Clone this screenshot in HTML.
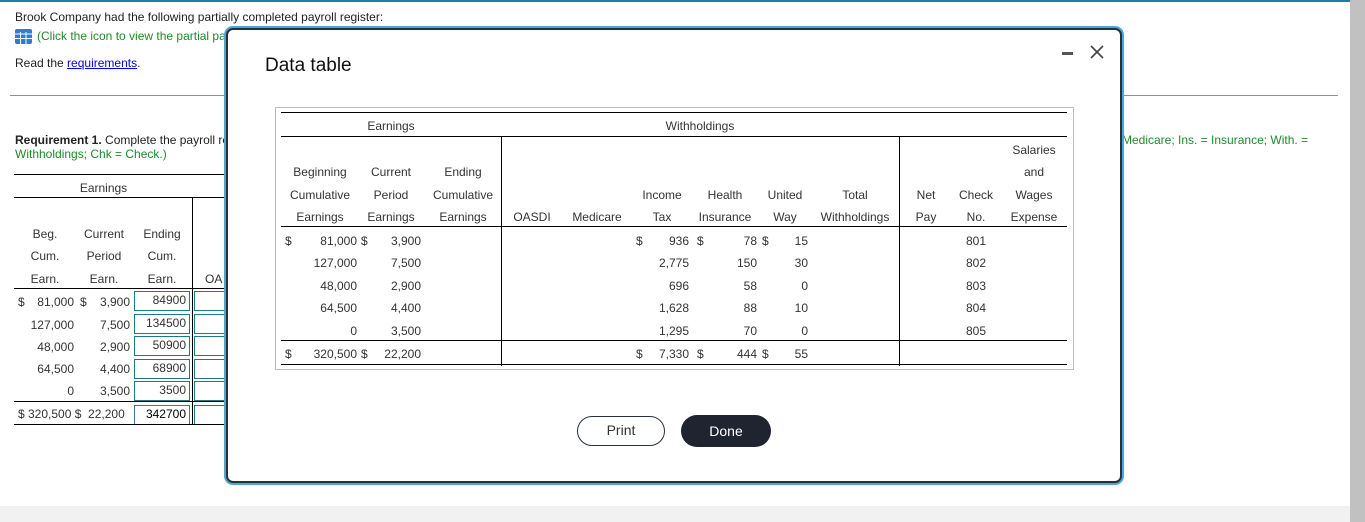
<!DOCTYPE html>
<html><head><meta charset="utf-8"><style>
*{margin:0;padding:0;box-sizing:border-box}
body{width:1365px;height:522px;position:relative;overflow:hidden;background:#fff;font-family:"Liberation Sans",sans-serif;font-size:12px;color:#222}
div{position:absolute;white-space:nowrap}
.c{text-align:center}
.r{text-align:right}
.h{color:#333}
.v{color:#333}
.ln{height:1px;background:#000}
.vl{width:1px;background:#000}
.in{border:1px solid #1a7a8a;height:20px;width:58px;text-align:right;padding-right:3px;line-height:16px;font-size:12px;color:#333}
</style></head><body>
<div style="left:0;top:0;width:1350px;height:2px;background:#1a7fa0"></div>
<div style="left:1350px;top:0;width:15px;height:522px;background:#c1c1c1"></div>
<div style="left:0;top:506px;width:1350px;height:16px;background:#f1f1f1"></div>

<div style="left:15px;top:10px">Brook Company had the following partially completed payroll register:</div>
<div style="left:15px;top:29px;width:17px;height:15px;background:#2a7fd0;border-radius:2px"></div>
<svg style="position:absolute;left:15px;top:29px" width="17" height="15"><g stroke="#fff" stroke-width="1"><line x1="0" y1="5" x2="17" y2="5"/><line x1="0" y1="9.5" x2="17" y2="9.5"/><line x1="5.5" y1="3" x2="5.5" y2="15"/><line x1="11" y1="3" x2="11" y2="15"/></g></svg>
<div style="left:37px;top:29px;color:#1d8a2a">(Click the icon to view the partial pay</div>
<div style="left:15px;top:56px">Read the <span style="color:#00e;text-decoration:underline">requirements</span>.</div>
<div style="left:10px;top:95px;width:1328px;height:1px;background:#8a93a0"></div>
<div style="left:15px;top:133px"><b>Requirement 1.</b> Complete the payroll re</div>
<div style="left:15px;top:147px;color:#1d8a2a">Withholdings; Chk = Check.)</div>
<div style="left:1122px;top:133px;color:#1d8a2a">Medicare; Ins. = Insurance; With. =</div>

<!-- left table -->
<div class="ln" style="left:14px;top:174px;width:214px"></div>
<div class="c h" style="left:14px;top:181px;width:179px">Earnings</div>
<div class="ln" style="left:14px;top:197px;width:214px"></div>
<div class="vl" style="left:192px;top:197px;height:228px"></div>
<div class="c h" style="left:30px;top:227px;width:30px">Beg.</div>
<div class="c h" style="left:80px;top:227px;width:48px">Current</div>
<div class="c h" style="left:140px;top:227px;width:44px">Ending</div>
<div class="c h" style="left:30px;top:249px;width:30px">Cum.</div>
<div class="c h" style="left:80px;top:249px;width:48px">Period</div>
<div class="c h" style="left:140px;top:249px;width:44px">Cum.</div>
<div class="c h" style="left:28px;top:272px;width:34px">Earn.</div>
<div class="c h" style="left:80px;top:272px;width:48px">Earn.</div>
<div class="c h" style="left:140px;top:272px;width:44px">Earn.</div>
<div class="h" style="left:205px;top:272px">OA</div>
<div class="ln" style="left:14px;top:288px;width:214px"></div>
<div class="v" style="left:18px;top:295px">$</div>
<div class="r v" style="left:30px;top:295px;width:44px">81,000</div>
<div class="v" style="left:80px;top:295px">$</div>
<div class="r v" style="left:80px;top:295px;width:50px">3,900</div>
<div class="r v" style="left:30px;top:318px;width:44px">127,000</div>
<div class="r v" style="left:80px;top:318px;width:50px">7,500</div>
<div class="r v" style="left:30px;top:340px;width:44px">48,000</div>
<div class="r v" style="left:80px;top:340px;width:50px">2,900</div>
<div class="r v" style="left:30px;top:362px;width:44px">64,500</div>
<div class="r v" style="left:80px;top:362px;width:50px">4,400</div>
<div class="r v" style="left:30px;top:384px;width:44px">0</div>
<div class="r v" style="left:80px;top:384px;width:50px">3,500</div>
<div class="in" style="left:134px;top:291px;width:56px">84900</div>
<div class="in" style="left:134px;top:314px;width:56px">134500</div>
<div class="in" style="left:134px;top:336px;width:56px">50900</div>
<div class="in" style="left:134px;top:359px;width:56px">68900</div>
<div class="in" style="left:134px;top:381px;width:56px">3500</div>
<div class="in" style="left:134px;top:405px;width:56px;border-color:#3b6fd0;color:#000">342700</div>
<div class="in" style="left:194px;top:291px;width:40px"></div>
<div class="in" style="left:194px;top:314px;width:40px"></div>
<div class="in" style="left:194px;top:336px;width:40px"></div>
<div class="in" style="left:194px;top:359px;width:40px"></div>
<div class="in" style="left:194px;top:381px;width:40px"></div>
<div class="in" style="left:194px;top:405px;width:40px"></div>
<div class="ln" style="left:14px;top:401px;width:214px"></div>
<div class="v" style="left:18px;top:407px">$ 320,500 $ &nbsp;22,200</div>
<div class="ln" style="left:14px;top:424px;width:214px"></div>

<!-- modal -->
<div style="left:226px;top:28px;width:896px;height:455px;border:2px solid #2a3038;border-radius:7px;background:#fff;box-shadow:0 0 0 2px #4aa8d8"></div>
<div style="left:265px;top:55px;font-size:19px;color:#111">Data table</div>
<div style="left:1062px;top:52px;width:11px;height:3px;background:#555"></div>
<svg style="position:absolute;left:1090px;top:45px" width="14" height="14"><path d="M1 1L13 13M13 1L1 13" stroke="#444" stroke-width="1.6"/></svg>

<div style="left:275px;top:107px;width:799px;height:263px;border:1px solid #bbb"></div>
<div class="ln" style="left:281px;top:112px;width:786px"></div>
<div class="c h" style="left:281px;top:119px;width:220px">Earnings</div>
<div class="c h" style="left:501px;top:119px;width:398px">Withholdings</div>
<div class="ln" style="left:281px;top:136px;width:786px"></div>
<div class="vl" style="left:501px;top:136px;height:230px"></div>
<div class="vl" style="left:899px;top:136px;height:230px"></div>

<div class="c h" style="left:285px;top:165px;width:70px">Beginning</div>
<div class="c h" style="left:360px;top:165px;width:62px">Current</div>
<div class="c h" style="left:428px;top:165px;width:70px">Ending</div>
<div class="c h" style="left:285px;top:188px;width:70px">Cumulative</div>
<div class="c h" style="left:360px;top:188px;width:62px">Period</div>
<div class="c h" style="left:428px;top:188px;width:70px">Cumulative</div>
<div class="c h" style="left:285px;top:210px;width:70px">Earnings</div>
<div class="c h" style="left:360px;top:210px;width:62px">Earnings</div>
<div class="c h" style="left:428px;top:210px;width:70px">Earnings</div>
<div class="c h" style="left:507px;top:210px;width:50px">OASDI</div>
<div class="c h" style="left:567px;top:210px;width:60px">Medicare</div>
<div class="c h" style="left:632px;top:188px;width:60px">Income</div>
<div class="c h" style="left:632px;top:210px;width:60px">Tax</div>
<div class="c h" style="left:693px;top:188px;width:64px">Health</div>
<div class="c h" style="left:693px;top:210px;width:64px">Insurance</div>
<div class="c h" style="left:760px;top:188px;width:50px">United</div>
<div class="c h" style="left:760px;top:210px;width:50px">Way</div>
<div class="c h" style="left:815px;top:188px;width:80px">Total</div>
<div class="c h" style="left:815px;top:210px;width:80px">Withholdings</div>
<div class="c h" style="left:906px;top:188px;width:40px">Net</div>
<div class="c h" style="left:906px;top:210px;width:40px">Pay</div>
<div class="c h" style="left:951px;top:188px;width:50px">Check</div>
<div class="c h" style="left:951px;top:210px;width:50px">No.</div>
<div class="c h" style="left:1004px;top:143px;width:60px">Salaries</div>
<div class="c h" style="left:1004px;top:165px;width:60px">and</div>
<div class="c h" style="left:1004px;top:188px;width:60px">Wages</div>
<div class="c h" style="left:1004px;top:210px;width:60px">Expense</div>
<div class="ln" style="left:281px;top:226px;width:786px"></div>

<div class="v" style="left:285px;top:234px">$</div>
<div class="v" style="left:361px;top:234px">$</div>
<div class="v" style="left:636px;top:234px">$</div>
<div class="v" style="left:697px;top:234px">$</div>
<div class="v" style="left:762px;top:234px">$</div>

<div class="r v" style="left:300px;top:234px;width:57px">81,000</div>
<div class="r v" style="left:370px;top:234px;width:51px">3,900</div>
<div class="r v" style="left:640px;top:234px;width:49px">936</div>
<div class="r v" style="left:710px;top:234px;width:47px">78</div>
<div class="r v" style="left:770px;top:234px;width:38px">15</div>
<div class="c v" style="left:951px;top:234px;width:50px">801</div>

<div class="r v" style="left:300px;top:256px;width:57px">127,000</div>
<div class="r v" style="left:370px;top:256px;width:51px">7,500</div>
<div class="r v" style="left:640px;top:256px;width:49px">2,775</div>
<div class="r v" style="left:710px;top:256px;width:47px">150</div>
<div class="r v" style="left:770px;top:256px;width:38px">30</div>
<div class="c v" style="left:951px;top:256px;width:50px">802</div>

<div class="r v" style="left:300px;top:279px;width:57px">48,000</div>
<div class="r v" style="left:370px;top:279px;width:51px">2,900</div>
<div class="r v" style="left:640px;top:279px;width:49px">696</div>
<div class="r v" style="left:710px;top:279px;width:47px">58</div>
<div class="r v" style="left:770px;top:279px;width:38px">0</div>
<div class="c v" style="left:951px;top:279px;width:50px">803</div>

<div class="r v" style="left:300px;top:301px;width:57px">64,500</div>
<div class="r v" style="left:370px;top:301px;width:51px">4,400</div>
<div class="r v" style="left:640px;top:301px;width:49px">1,628</div>
<div class="r v" style="left:710px;top:301px;width:47px">88</div>
<div class="r v" style="left:770px;top:301px;width:38px">10</div>
<div class="c v" style="left:951px;top:301px;width:50px">804</div>

<div class="r v" style="left:300px;top:324px;width:57px">0</div>
<div class="r v" style="left:370px;top:324px;width:51px">3,500</div>
<div class="r v" style="left:640px;top:324px;width:49px">1,295</div>
<div class="r v" style="left:710px;top:324px;width:47px">70</div>
<div class="r v" style="left:770px;top:324px;width:38px">0</div>
<div class="c v" style="left:951px;top:324px;width:50px">805</div>

<div class="ln" style="left:281px;top:340px;width:786px"></div>
<div class="v" style="left:285px;top:347px">$</div>
<div class="v" style="left:361px;top:347px">$</div>
<div class="v" style="left:636px;top:347px">$</div>
<div class="v" style="left:697px;top:347px">$</div>
<div class="v" style="left:762px;top:347px">$</div>
<div class="r v" style="left:300px;top:347px;width:57px">320,500</div>
<div class="r v" style="left:370px;top:347px;width:51px">22,200</div>
<div class="r v" style="left:640px;top:347px;width:49px">7,330</div>
<div class="r v" style="left:710px;top:347px;width:47px">444</div>
<div class="r v" style="left:770px;top:347px;width:38px">55</div>
<div class="ln" style="left:281px;top:364px;width:786px"></div>

<div class="c" style="left:577px;top:416px;width:88px;height:30px;border:1.5px solid #2a3038;border-radius:15px;line-height:27px;font-size:14px;color:#333">Print</div>
<div class="c" style="left:681px;top:415px;width:90px;height:32px;background:#1e2430;border-radius:16px;line-height:32px;font-size:14px;color:#fff">Done</div>
</body></html>
